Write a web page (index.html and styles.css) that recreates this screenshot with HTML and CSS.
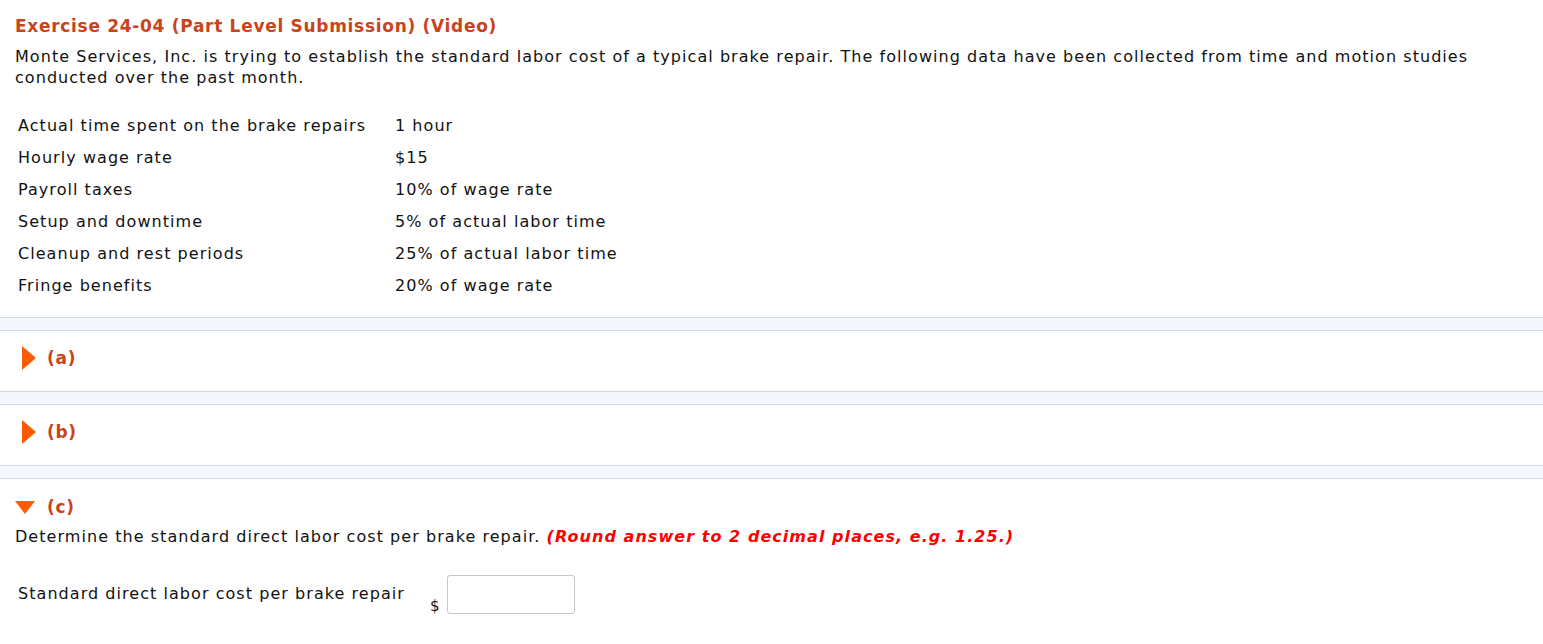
FILE: index.html
```html
<!DOCTYPE html>
<html>
<head>
<meta charset="utf-8">
<link rel="stylesheet" href="styles.css">
</head>
<body>
<div class="intro">
  <h1 class="title">Exercise 24-04 (Part Level Submission) (Video)</h1>
  <p class="desc">Monte Services, Inc. is trying to establish the standard labor cost of a typical brake repair. The following data have been collected from time and motion studies conducted over the past month.</p>
  <table class="data">
    <tr><td class="lbl">Actual time spent on the brake repairs</td><td>1 hour</td></tr>
    <tr><td class="lbl">Hourly wage rate</td><td>$15</td></tr>
    <tr><td class="lbl">Payroll taxes</td><td>10% of wage rate</td></tr>
    <tr><td class="lbl">Setup and downtime</td><td>5% of actual labor time</td></tr>
    <tr><td class="lbl">Cleanup and rest periods</td><td>25% of actual labor time</td></tr>
    <tr><td class="lbl">Fringe benefits</td><td>20% of wage rate</td></tr>
  </table>
</div>
<div class="band"></div>
<div class="part collapsed">
  <span class="tri-right"></span><span class="plabel">(a)</span>
</div>
<div class="band"></div>
<div class="part collapsed">
  <span class="tri-right"></span><span class="plabel">(b)</span>
</div>
<div class="band"></div>
<div class="part open">
  <div class="phead"><span class="tri-down"></span><span class="plabel">(c)</span></div>
  <p class="q">Determine the standard direct labor cost per brake repair. <em class="hint">(Round answer to 2 decimal places, e.g. 1.25.)</em></p>
  <div class="answer">
    <span class="alabel">Standard direct labor cost per brake repair</span>
    <span class="dollar">$</span>
    <span class="box"></span>
  </div>
</div>
</body>
</html>
```
FILE: styles.css
```css
html, body {
  margin: 0;
  padding: 0;
  background: #fff;
  font-family: "DejaVu Sans", Verdana, sans-serif;
  font-size: 16px;
  letter-spacing: 1.05px;
  color: #111;
}
.intro {
  padding: 15px 15px 15px 15px;
}
.title {
  margin: 0;
  font-size: 17px;
  line-height: 22px;
  font-weight: bold;
  letter-spacing: 0.7px;
  color: #c9441a;
}
.desc {
  margin: 9px 0 0 0;
  line-height: 21px;
}
.data {
  border-collapse: collapse;
  margin-top: 22px;
  margin-left: 1px;
}
.data td {
  padding: 0 2px;
  height: 32px;
  line-height: 20px;
  vertical-align: middle;
}
.data td.lbl {
  width: 373px;
}
.band {
  height: 12px;
  background: #f4f7fb;
  border-top: 1px solid #cfd6df;
  border-bottom: 1px solid #cfd6df;
}
.part.collapsed {
  box-sizing: border-box;
  height: 60px;
  display: flex;
  align-items: center;
  padding: 0 0 6px 22px;
}
.tri-right {
  width: 0;
  height: 0;
  border-top: 12px solid transparent;
  border-bottom: 12px solid transparent;
  border-left: 14px solid #ff5a00;
  margin-right: 11px;
}
.plabel {
  font-weight: bold;
  color: #c9441a;
  font-size: 17px;
  letter-spacing: 0.7px;
}
.part.open {
  padding: 18px 15px 20px 15px;
}
.phead {
  display: flex;
  align-items: center;
}
.tri-down {
  width: 0;
  height: 0;
  border-left: 10px solid transparent;
  border-right: 10px solid transparent;
  border-top: 13px solid #ff5a00;
  margin-right: 12px;
}
.q {
  margin: 9px 0 0 0;
  line-height: 21px;
}
.hint {
  color: #ff0000;
  font-weight: bold;
  font-style: italic;
}
.answer {
  display: flex;
  align-items: flex-end;
  margin-top: 28px;
  padding-left: 3px;
}
.alabel {
  width: 412px;
  align-self: center;
  padding-bottom: 2px;
}
.dollar {
  font-size: 15px;
  line-height: 16px;
  margin-right: 7px;
  letter-spacing: 0;
}
.box {
  display: block;
  width: 126px;
  height: 37px;
  border: 1px solid #c8c8c8;
  border-radius: 3px;
  background: #fff;
}
```
